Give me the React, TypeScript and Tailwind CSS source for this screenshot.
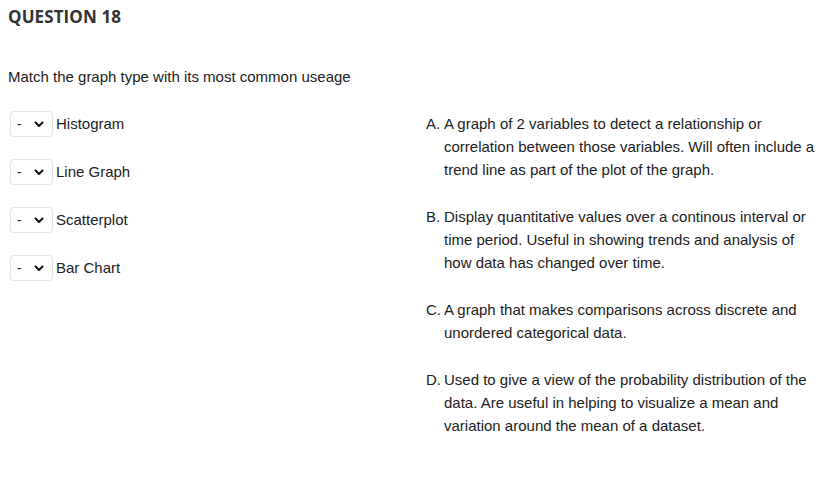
import React from "react";

const left = ["Histogram", "Line Graph", "Scatterplot", "Bar Chart"];
const right: [string, string[]][] = [
  ["A.", ["A graph of 2 variables to detect a relationship or", "correlation between those variables. Will often include a", "trend line as part of the plot of the graph."]],
  ["B.", ["Display quantitative values over a continous interval or", "time period. Useful in showing trends and analysis of", "how data has changed over time."]],
  ["C.", ["A graph that makes comparisons across discrete and", "unordered categorical data."]],
  ["D.", ["Used to give a view of the probability distribution of the", "data. Are useful in helping to visualize a mean and", "variation around the mean of a dataset."]],
];

function Chevron() {
  return (
    <svg width="10" height="7" viewBox="0 0 10 7" className="block">
      <path d="M1.5 1.5 L5 5 L8.5 1.5" fill="none" stroke="#111" strokeWidth="2" strokeLinecap="round" strokeLinejoin="round" />
    </svg>
  );
}

export default function App() {
  return (
    <div className="w-[839px] h-[477px] bg-white text-[#222]" style={{ fontFamily: "'Liberation Sans', Arial, sans-serif" }}>
      <div className="pl-2 pt-[5px]">
        <h1 className="text-[17px] font-bold text-[#333] leading-[24px] tracking-[0.1px]" style={{ fontFamily: "'Open Sans', sans-serif" }}>
          QUESTION 18
        </h1>
      </div>
      <p className="pl-2 mt-[38px] text-[15px] leading-[20px]">Match the graph type with its most common useage</p>
      <div className="flex mt-[24px]">
        <div className="w-[426px] pl-[10px] flex flex-col gap-[22px]">
          {left.map((l) => (
            <div key={l} className="flex items-center h-[26px]">
              <div className="w-[43px] h-[26px] border border-[#e3e3e3] rounded-[4px] flex items-center justify-between pl-[6px] pr-[8px] text-[14px]">
                <span>-</span>
                <Chevron />
              </div>
              <span className="ml-[3px] text-[15px]">{l}</span>
            </div>
          ))}
        </div>
        <div className="flex flex-col gap-[24px] pt-[1px]">
          {right.map(([k, lines]) => (
            <div key={k} className="flex text-[15px] leading-[23px]">
              <span className="w-[18px]">{k}</span>
              <div>
                {lines.map((t) => (
                  <div key={t}>{t}</div>
                ))}
              </div>
            </div>
          ))}
        </div>
      </div>
    </div>
  );
}
